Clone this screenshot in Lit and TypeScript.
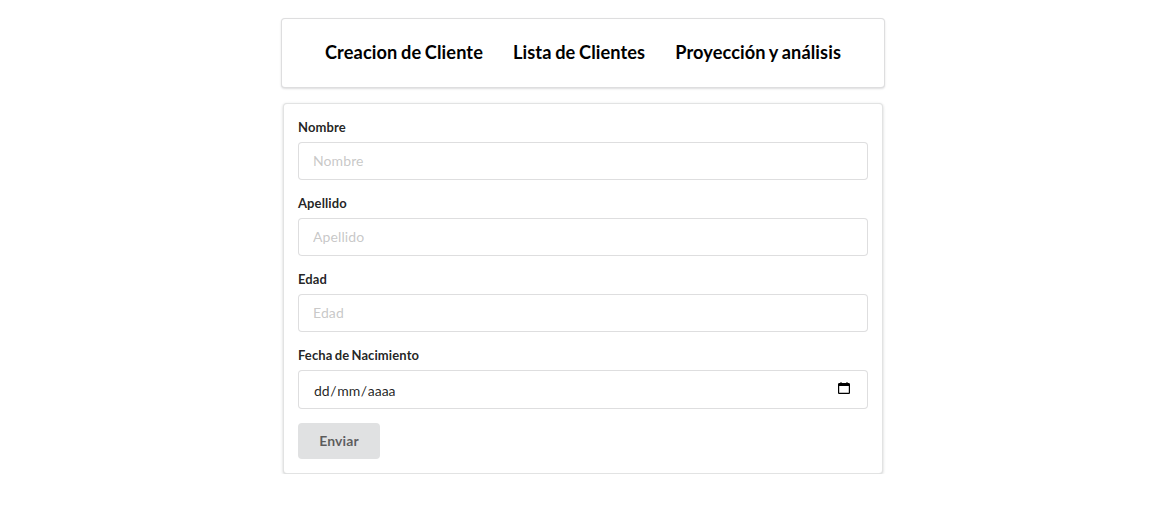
import { LitElement, html, css } from "lit";
import { customElement } from "lit/decorators.js";

@customElement("app-root")
export class AppRoot extends LitElement {
  static styles = css`
    :host { display: block; font-family: Lato, "Helvetica Neue", Arial, sans-serif; font-size: 14px; line-height: 20px; color: rgba(0,0,0,.87); background: #fff; text-rendering: optimizeLegibility; }
    * { box-sizing: border-box; }
    .wrap { width: 604px; margin-left: 281px; padding-top: 18px; }
    .menu { height: 70px; padding-bottom: 2px; display: flex; justify-content: center; align-items: center; gap: 30px; background: #fff; border: 1px solid rgba(34,36,38,.15); border-radius: 4px; box-shadow: 0 1px 2px 0 rgba(34,36,38,.15); }
    .menu a { font-size: 18.2px; font-weight: 700; color: #000; letter-spacing: .1px; word-spacing: -.9px; }
    .form { width: 600px; margin: 15px auto 0; padding: 14px; display: flex; flex-direction: column; background: #fff; border: 1px solid rgba(34,36,38,.13); border-radius: 4px; box-shadow: 0 1px 3px 0 rgba(34,36,38,.22); }
    label { display: block; font-size: 13px; font-weight: 700; line-height: 18px; margin-bottom: 6px; color: rgba(0,0,0,.87); letter-spacing: .1px; word-spacing: -1px; }
    .field { margin-bottom: 14px; }
    input, .date { display: block; width: 100%; height: 38px; padding: 0 14px 2px; font: 14px Lato, sans-serif; color: rgba(0,0,0,.87); border: 1px solid rgba(34,36,38,.15); border-radius: 4px; outline: none; background: #fff; text-rendering: optimizeLegibility; letter-spacing: .1px; }
    input::placeholder { color: rgba(191,191,191,.87); }
    .date { height: 39px; padding: 2px 17px 0 15px; display: flex; align-items: center; justify-content: space-between; letter-spacing: 0; }
    .date svg { display: block; flex: none; margin-top: -5px; }
    .sep { margin: 0 .6px; }
    button { align-self: flex-start; width: 82px; height: 36px; padding: 0 0 2px; border: 0; border-radius: 4px; background: #e0e1e2; color: rgba(0,0,0,.6); font: 700 14px Lato, sans-serif; text-rendering: optimizeLegibility; letter-spacing: .1px; }
  `;
  render() {
    return html`<div class="wrap">
      <nav class="menu"><a>Creacion de Cliente</a><a>Lista de Clientes</a><a>Proyección y análisis</a></nav>
      <form class="form">
        <div class="field"><label>Nombre</label><input placeholder="Nombre" /></div>
        <div class="field"><label>Apellido</label><input placeholder="Apellido" /></div>
        <div class="field"><label>Edad</label><input placeholder="Edad" /></div>
        <div class="field"><label>Fecha de Nacimiento</label>
          <div class="date"><span>dd<span class="sep">/</span>mm<span class="sep">/</span>aaaa</span>
            <svg width="12" height="12" viewBox="0 0 12 12" aria-hidden="true"><path fill="#000" d="M1.300 1H2.500V0H3.500V1H8.500V0H9.500V1H10.700C11.400 1 12 1.600 12 2.300V10.700C12 11.400 11.400 12 10.700 12H1.300C.6 12 0 11.400 0 10.700V2.300C0 1.600 .6 1 1.300 1ZM1.200 4V10.800H10.800V4H1.200Z"/></svg>
          </div>
        </div>
        <button type="button">Enviar</button>
      </form>
    </div>`;
  }
}
